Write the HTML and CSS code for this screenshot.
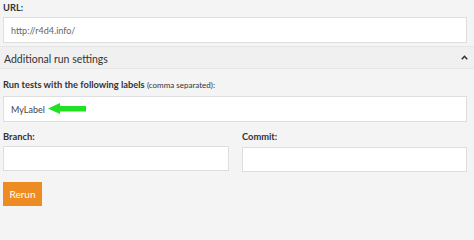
FILE: index.html
```html
<!DOCTYPE html>
<html>
<head>
<meta charset="utf-8">
<link rel="stylesheet" href="styles.css">
</head>
<body>
<div class="page">
  <div class="field">
    <label class="label">URL:</label>
    <input class="input" type="text" value="http://r4d4.info/">
  </div>
  <div class="section-head">
    <span class="section-title">Additional run settings</span>
    <svg class="chevron" width="7" height="5" viewBox="0 0 7 5"><polyline points="0.8,4.2 3.5,1.3 6.2,4.2" fill="none" stroke="#333" stroke-width="1.6"/></svg>
  </div>
  <div class="field field-labels">
    <label class="label">Run tests with the following labels <span class="hint">(comma separated):</span></label>
    <div class="input-wrap">
      <input class="input input-dark" type="text" value="MyLabel">
      <svg class="arrow" width="38" height="11" viewBox="0 0 38 11"><polygon points="0,5.5 12,0 12,3 38,3 38,8.5 12,8.5 12,11" fill="#22e022"/></svg>
    </div>
  </div>
  <div class="row">
    <div class="field col">
      <label class="label">Branch:</label>
      <input class="input" type="text" value="">
    </div>
    <div class="field col">
      <label class="label">Commit:</label>
      <input class="input" type="text" value="">
    </div>
  </div>
  <button class="btn" type="button">Rerun</button>
</div>
</body>
</html>
```
FILE: styles.css
```css
html, body {
  margin: 0;
  padding: 0;
  background: #f4f4f4;
}
body {
  font-family: Lato, "Liberation Sans", sans-serif;
  color: #333;
}
.page {
  width: 474px;
  height: 214px;
  box-sizing: border-box;
  padding: 0 7px 0 3px;
  overflow: hidden;
}
.field {
  display: flex;
  flex-direction: column;
}
.label {
  font-size: 9.3px;
  font-weight: bold;
  line-height: 14px;
  margin-bottom: 3px;
  padding-top: 1px;
  color: #333;
  white-space: nowrap;
}
.hint {
  font-size: 8px;
  font-weight: normal;
}
.input {
  display: block;
  box-sizing: border-box;
  width: 100%;
  height: 26px;
  margin: 0;
  border: 1px solid #dedede;
  background: #fff;
  padding: 0 0 0 7px;
  font-family: Lato, "Liberation Sans", sans-serif;
  font-size: 9px;
  color: #666;
  outline: none;
}
.field:first-child .label {
  margin-bottom: 2px;
}
.input-dark {
  color: #444;
}
.section-head {
  margin: 3px -7px 0 -3px;
  height: 23px;
  box-sizing: border-box;
  border-top: 1px solid #e6e6e6;
  border-bottom: 1px solid #e6e6e6;
  background: #f0f0f0;
  padding: 3px 6px 0 4px;
  display: flex;
  align-items: center;
  justify-content: space-between;
}
.section-title {
  font-size: 10.5px;
  line-height: 14px;
  color: #333;
}
.chevron {
  display: block;
  margin-top: -4px;
}
.field-labels {
  margin-top: 8px;
}
.field-labels .label {
  margin-bottom: 4px;
}
.input-wrap {
  position: relative;
}
.arrow {
  position: absolute;
  left: 45px;
  top: 7px;
}
.row {
  display: grid;
  grid-template-columns: 226px 225px;
  column-gap: 13px;
  margin-top: 7px;
}
.row .input {
  height: 25px;
}
.btn {
  display: block;
  margin-top: 10px;
  width: 39px;
  height: 24px;
  border: none;
  border-radius: 0;
  background: #ec8c22;
  color: #fff;
  font-family: Lato, "Liberation Sans", sans-serif;
  font-size: 10px;
  padding: 0;
}
```
